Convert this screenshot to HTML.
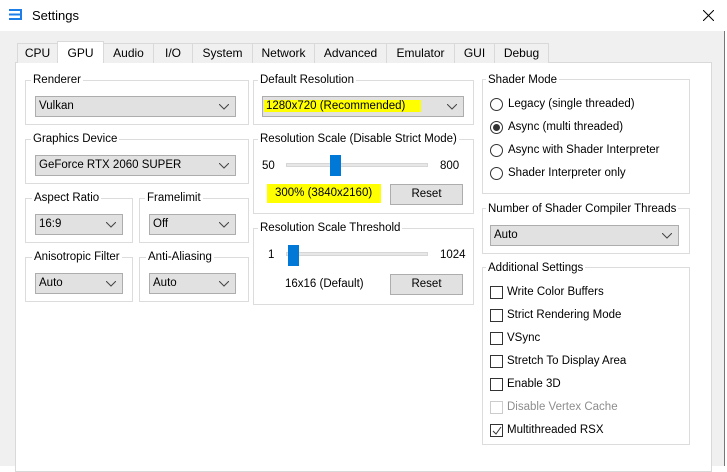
<!DOCTYPE html>
<html><head><style>
*{box-sizing:border-box;margin:0;padding:0}
body{width:727px;height:466px;overflow:hidden;background:#fff;font-family:"Liberation Sans",sans-serif;font-size:11.5px;color:#000;position:relative}
.a{position:absolute}
.win{left:0;top:0;width:725px;height:466px;background:#f0f0f0;border-right:1px solid #777}
.title{left:0;top:0;width:725px;height:31px;background:#fff}
.page{left:15px;top:62px;width:697px;height:410px;background:#fff;border:1px solid #d9d9d9}
.tab{top:43px;height:20px;border:1px solid #d9d9d9;border-bottom:none;background:#f0f0f0;text-align:center;line-height:19px;font-size:12px}
.tab.sel{top:41px;height:22px;background:#fff;line-height:22px;z-index:2}
.grp{border:1px solid #dcdcdc}
.gl{background:#fff;padding:0 2px;line-height:14px}
.cb{background:#e1e1e1;border:1px solid #adadad;height:21px;line-height:19px;padding-left:3px}
.cb svg{position:absolute;right:6px;top:7px}
.btn{background:#e1e1e1;border:1px solid #adadad;text-align:center;line-height:19px;height:21px}
.track{height:4px;background:#e7e7e7;border:1px solid #d6d6d6}
.thumb{width:11px;height:21px;background:#0078d7}
.rad{width:13px;height:13px;border:1px solid #333;border-radius:50%;background:#fff}
.chk{width:13px;height:13px;border:1px solid #333;background:#fff}
</style></head><body>
<div class="a win"></div>
<div class="a title"></div>
<svg class="a" style="left:8px;top:9px" width="16" height="12"><g stroke="#1e7ee8" stroke-width="2" fill="none"><path d="M1 1h12v9H1M1 5.5h12"/></g></svg>
<div class="a" style="left:32px;top:8px;font-size:13px">Settings</div>
<svg class="a" style="left:703px;top:10px" width="11" height="11"><path d="M0 0L11 11M11 0L0 11" stroke="#000" stroke-width="1"/></svg>

<div class="a page"></div>
<div class="a tab" style="left:17px;width:41px">CPU</div>
<div class="a tab sel" style="left:57px;width:47px">GPU</div>
<div class="a tab" style="left:103px;width:51px">Audio</div>
<div class="a tab" style="left:153px;width:40px">I/O</div>
<div class="a tab" style="left:192px;width:61px">System</div>
<div class="a tab" style="left:252px;width:63px">Network</div>
<div class="a tab" style="left:314px;width:73px">Advanced</div>
<div class="a tab" style="left:386px;width:69px">Emulator</div>
<div class="a tab" style="left:454px;width:41px">GUI</div>
<div class="a tab" style="left:494px;width:55px">Debug</div>

<div class="a grp" style="left:25px;top:80px;width:224px;height:45px"></div>
<div class="a gl" style="left:31px;top:73px">Renderer</div>
<div class="a cb" style="left:35px;top:96px;width:201px">Vulkan<svg width="10" height="6"><path d="M0 0L5 5L10 0" stroke="#444" fill="none"/></svg></div>

<div class="a grp" style="left:25px;top:139px;width:224px;height:45px"></div>
<div class="a gl" style="left:31px;top:132px">Graphics Device</div>
<div class="a cb" style="left:35px;top:155px;width:201px">GeForce RTX 2060 SUPER<svg width="10" height="6"><path d="M0 0L5 5L10 0" stroke="#444" fill="none"/></svg></div>

<div class="a grp" style="left:25px;top:198px;width:108px;height:45px"></div>
<div class="a gl" style="left:32px;top:191px">Aspect Ratio</div>
<div class="a cb" style="left:35px;top:214px;width:88px">16:9<svg width="10" height="6"><path d="M0 0L5 5L10 0" stroke="#444" fill="none"/></svg></div>
<div class="a grp" style="left:139px;top:198px;width:110px;height:45px"></div>
<div class="a gl" style="left:145px;top:191px">Framelimit</div>
<div class="a cb" style="left:149px;top:214px;width:87px">Off<svg width="10" height="6"><path d="M0 0L5 5L10 0" stroke="#444" fill="none"/></svg></div>

<div class="a grp" style="left:25px;top:257px;width:108px;height:45px"></div>
<div class="a gl" style="left:32px;top:250px">Anisotropic Filter</div>
<div class="a cb" style="left:35px;top:273px;width:88px">Auto<svg width="10" height="6"><path d="M0 0L5 5L10 0" stroke="#444" fill="none"/></svg></div>
<div class="a grp" style="left:139px;top:257px;width:110px;height:45px"></div>
<div class="a gl" style="left:146px;top:250px">Anti-Aliasing</div>
<div class="a cb" style="left:149px;top:273px;width:87px">Auto<svg width="10" height="6"><path d="M0 0L5 5L10 0" stroke="#444" fill="none"/></svg></div>

<div class="a grp" style="left:253px;top:80px;width:221px;height:45px"></div>
<div class="a gl" style="left:258px;top:73px">Default Resolution</div>
<div class="a cb" style="left:262px;top:96px;width:202px"><span style="background:#ffff00;padding:0 16px 0 2px;margin-left:-2px">1280x720 (Recommended)</span><svg width="10" height="6"><path d="M0 0L5 5L10 0" stroke="#444" fill="none"/></svg></div>

<div class="a grp" style="left:253px;top:139px;width:221px;height:75px"></div>
<div class="a gl" style="left:258px;top:132px">Resolution Scale (Disable Strict Mode)</div>
<div class="a" style="left:262px;top:160px">50</div>
<div class="a track" style="left:286px;top:163px;width:142px"></div>
<div class="a thumb" style="left:330px;top:155px"></div>
<div class="a" style="left:440px;top:160px">800</div>
<div class="a" style="left:267px;top:184px;width:114px;height:19px;background:#ffff00"></div>
<div class="a" style="left:275px;top:187px">300% (3840x2160)</div>
<div class="a btn" style="left:390px;top:184px;width:73px">Reset</div>

<div class="a grp" style="left:253px;top:228px;width:221px;height:77px"></div>
<div class="a gl" style="left:258px;top:221px">Resolution Scale Threshold</div>
<div class="a" style="left:268px;top:249px">1</div>
<div class="a track" style="left:286px;top:252px;width:142px"></div>
<div class="a thumb" style="left:288px;top:245px"></div>
<div class="a" style="left:440px;top:249px">1024</div>
<div class="a" style="left:285px;top:278px">16x16 (Default)</div>
<div class="a btn" style="left:390px;top:274px;width:73px">Reset</div>

<div class="a grp" style="left:482px;top:79px;width:208px;height:115px"></div>
<div class="a gl" style="left:486px;top:73px">Shader Mode</div>
<div class="a rad" style="left:490px;top:98px"></div><div class="a" style="left:508px;top:98px">Legacy (single threaded)</div>
<div class="a rad" style="left:490px;top:121px"><div class="a" style="left:2px;top:2px;width:7px;height:7px;border-radius:50%;background:#333"></div></div><div class="a" style="left:508px;top:121px">Async (multi threaded)</div>
<div class="a rad" style="left:490px;top:144px"></div><div class="a" style="left:508px;top:144px">Async with Shader Interpreter</div>
<div class="a rad" style="left:490px;top:167px"></div><div class="a" style="left:508px;top:167px">Shader Interpreter only</div>

<div class="a grp" style="left:482px;top:208px;width:208px;height:46px"></div>
<div class="a gl" style="left:486px;top:202px">Number of Shader Compiler Threads</div>
<div class="a cb" style="left:490px;top:225px;width:189px">Auto<svg width="10" height="6"><path d="M0 0L5 5L10 0" stroke="#444" fill="none"/></svg></div>

<div class="a grp" style="left:482px;top:267px;width:208px;height:178px"></div>
<div class="a gl" style="left:486px;top:261px">Additional Settings</div>
<div class="a chk" style="left:490px;top:286px"></div><div class="a" style="left:507px;top:286px">Write Color Buffers</div>
<div class="a chk" style="left:490px;top:309px"></div><div class="a" style="left:507px;top:309px">Strict Rendering Mode</div>
<div class="a chk" style="left:490px;top:332px"></div><div class="a" style="left:507px;top:332px">VSync</div>
<div class="a chk" style="left:490px;top:355px"></div><div class="a" style="left:507px;top:355px">Stretch To Display Area</div>
<div class="a chk" style="left:490px;top:378px"></div><div class="a" style="left:507px;top:378px">Enable 3D</div>
<div class="a chk" style="left:490px;top:401px;border-color:#ccc"></div><div class="a" style="left:507px;top:401px;color:#8d8d8d">Disable Vertex Cache</div>
<div class="a chk" style="left:490px;top:424px"><svg class="a" style="left:1px;top:1px" width="10" height="10"><path d="M1 5L4 8L9 1" stroke="#333" fill="none"/></svg></div><div class="a" style="left:507px;top:424px">Multithreaded RSX</div>
</body></html>
